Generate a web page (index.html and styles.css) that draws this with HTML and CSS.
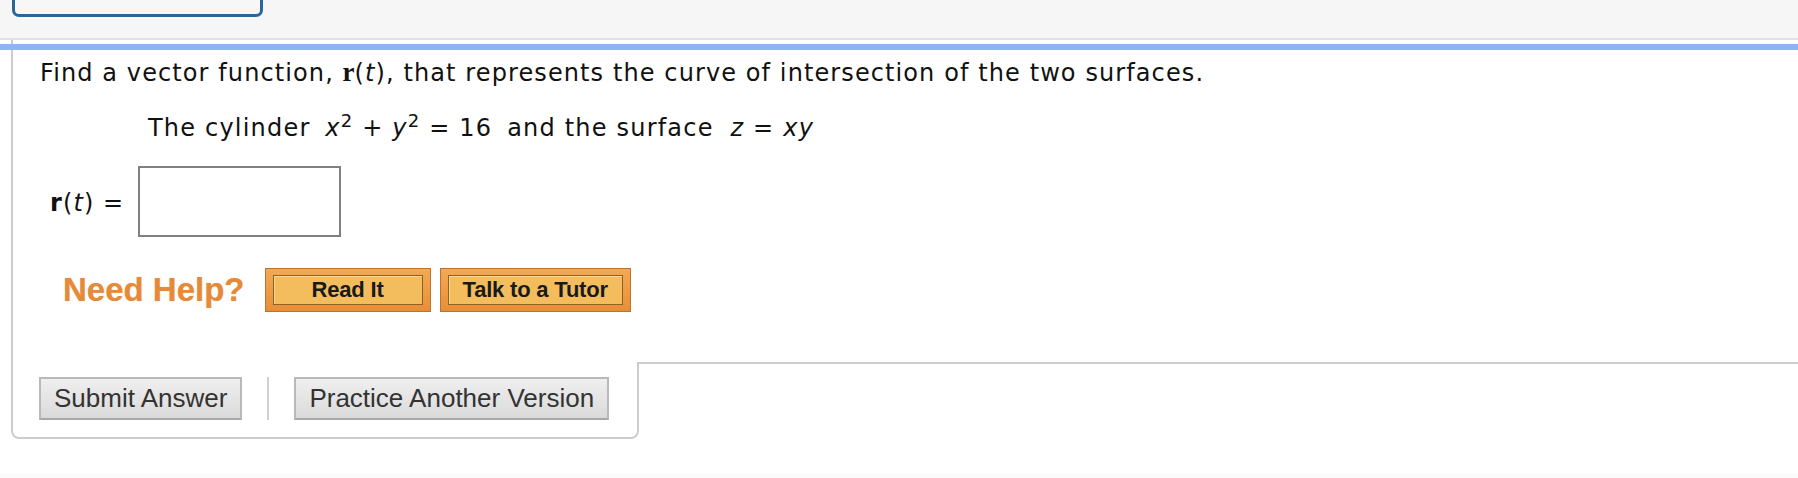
FILE: index.html
```html
<!DOCTYPE html>
<html>
<head>
<meta charset="utf-8">
<link rel="stylesheet" href="styles.css">
</head>
<body>
<div class="topbar">
  <div class="tabbox"></div>
</div>
<div class="qbody">
  <div class="bluebar"></div>
  <div class="qcontent">
    <p class="q">Find a vector function, <b class="vec">r</b>(<i>t</i>), that represents the curve of intersection of the two surfaces.</p>
    <p class="eq">The cylinder <span class="m"><i>x</i><sup>2</sup> + <i>y</i><sup>2</sup> = 16</span> and the surface <span class="m"><i>z</i> = <i>xy</i></span></p>
    <div class="answer-row">
      <span class="label"><b>r</b>(<i>t</i>) =</span>
      <span class="answer-box"></span>
    </div>
    <div class="help-row">
      <span class="need-help">Need Help?</span>
      <span class="help-btn read"><span class="help-inner">Read It</span></span>
      <span class="help-btn"><span class="help-inner">Talk to a Tutor</span></span>
    </div>
  </div>
</div>
<div class="bottom-row">
  <div class="actions">
    <span class="btn">Submit Answer</span>
    <span class="sep"></span>
    <span class="btn">Practice Another Version</span>
  </div>
  <div class="rest"></div>
</div>
<div class="footer"></div>
</body>
</html>
```
FILE: styles.css
```css
html, body {
  margin: 0;
  padding: 0;
  background: #fff;
}
body {
  width: 1798px;
  height: 478px;
  overflow: hidden;
  font-family: "DejaVu Sans", Verdana, sans-serif;
  color: #111;
}
.topbar {
  height: 38px;
  background: #f6f6f6;
  border-bottom: 2px solid #e0e0e0;
}
.tabbox {
  margin-left: 12px;
  width: 245px;
  height: 14px;
  border: 3px solid #2b6698;
  border-top: none;
  border-radius: 0 0 7px 7px;
  background: #f7f7f7;
}
.qbody {
  margin-left: 11px;
  border-left: 2px solid #cccccc;
  padding-top: 4px;
}
.bluebar {
  height: 6px;
  margin-left: -13px;
  background: #8fb5f1;
}
.qcontent {
  padding: 8px 0 50px 27px;
}
.q, .eq {
  margin: 0;
  font-size: 24px;
  line-height: 28px;
  letter-spacing: 1.1px;
}
.eq {
  margin-top: 27px;
  padding-left: 108px;
  letter-spacing: 1.2px;
}
.vec {
  font-family: "Liberation Serif", serif;
  font-weight: bold;
  font-size: 27px;
  letter-spacing: 0;
}
.m {
  margin: 0 6px;
}
.m + .m {
  margin-left: 8px;
}
sup {
  font-size: 0.75em;
  line-height: 0;
  vertical-align: 0.5em;
}
.answer-row {
  display: flex;
  align-items: center;
  margin-top: 24px;
  padding-left: 10px;
  font-size: 24px;
  letter-spacing: 1.1px;
}
.label {
  padding-top: 2px;
}
.label b {
  font-weight: bold;
}
.answer-box {
  margin-left: 14px;
  width: 199px;
  height: 67px;
  border: 2px solid #808080;
  background: #fff;
}
.help-row {
  display: flex;
  align-items: center;
  margin-top: 31px;
  padding-left: 23px;
  font-family: "Liberation Sans", Arial, sans-serif;
}
.need-help {
  font-size: 33px;
  font-weight: bold;
  color: #e58a38;
  margin-right: 20px;
  text-shadow: 0 0 1px rgba(229, 138, 56, 0.5);
}
.help-btn {
  display: flex;
  padding: 6px 7px;
  background: linear-gradient(#f3a955, #e88f36);
  border: 1px solid #b8752f;
  margin-right: 9px;
}
.help-btn.read {
  width: 150px;
}
.help-inner {
  flex: 1;
  text-align: center;
  padding: 2px 14px;
  font-size: 22px;
  font-weight: bold;
  line-height: 24px;
  letter-spacing: -0.2px;
  color: #1a1a1a;
  background: #f3bd5e;
  border: 1px solid #8f6128;
  box-shadow: inset 1px 1px 0 #fbd890;
}
.bottom-row {
  display: flex;
  margin-left: 11px;
}
.actions {
  display: flex;
  align-items: center;
  gap: 25px;
  padding: 15px 28px 17px 26px;
  border: 2px solid #cccccc;
  border-top: none;
  border-radius: 0 0 8px 8px;
}
.btn {
  display: block;
  height: 39px;
  line-height: 39px;
  padding: 0 13px;
  font-family: "Liberation Sans", Arial, sans-serif;
  font-size: 26px;
  color: #333;
  background: linear-gradient(#efefef, #dadada);
  border: 2px solid #b9b9b9;
  border-bottom-color: #a9a9a9;
}
.sep {
  display: block;
  width: 2px;
  height: 43px;
  background: #d0d0d0;
}
.rest {
  flex: 1;
  border-top: 2px solid #cccccc;
}
.footer {
  margin-top: 35px;
  height: 20px;
  background: linear-gradient(#fbfbfb, #f4f4f4);
}
```
